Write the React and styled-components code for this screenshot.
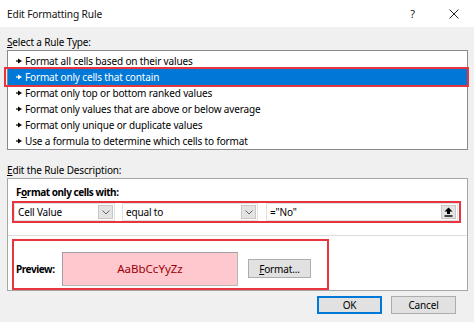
import React from 'react';
import styled, { createGlobalStyle } from 'styled-components';

const Global = createGlobalStyle`
  html, body { margin: 0; padding: 0; }
  body {
    width: 474px; height: 322px; overflow: hidden;
    background: #f0f0f0;
    font-family: "Noto Sans", "Open Sans", sans-serif;
    font-size: 10px; color: #000;
    letter-spacing: -0.15px;
  }
  * { box-sizing: border-box; }
`;

const RED = '#e6353e';

const Dialog = styled.div`
  width: 474px; height: 322px;
  display: flex; flex-direction: column;
  background: #f0f0f0;
`;

const TitleBar = styled.div`
  height: 27px; flex-shrink: 0;
  background: #fff;
  display: flex; align-items: center;
  padding-left: 7px;
`;

const Title = styled.div`
  flex: 1;
  font-size: 10.2px;
  color: #111;
`;

const TitleButton = styled.div`
  width: 41px; height: 27px;
  display: flex; align-items: center; justify-content: center;
  font-size: 11px; color: #222;
`;

const Body = styled.div`
  display: flex; flex-direction: column;
  padding: 0 6px 0 7px;
`;

const SectionLabel = styled.div`
  line-height: 14px;
  margin-top: ${p => p.$top}px;
`;

const ListBox = styled.div`
  margin-top: 1px;
  height: 100px;
  border: 1px solid #8a8a8a;
  background: #fff;
  padding-top: 2px;
`;

const Row = styled.div`
  position: relative;
  height: 16px;
  display: flex; align-items: center; gap: 3px;
  padding-left: 8px;
  background: ${p => (p.$selected ? '#0078d7' : 'transparent')};
  color: ${p => (p.$selected ? '#fff' : '#000')};
  ${p => p.$selected && `
    &::after {
      content: '';
      position: absolute;
      left: -4px; right: -2px; top: -2px; bottom: -2px;
      border: 2px solid ${RED};
    }
  `}
`;

const DescBox = styled.div`
  margin-top: 1px;
  border: 1px solid #a6a6a6;
  background: #fff;
  display: flex; flex-direction: column;
`;

const Heading = styled.div`
  padding: 6px 0 0 8px;
  line-height: 14px;
  font-weight: bold;
  letter-spacing: -0.45px;
`;

const CriteriaRow = styled.div`
  margin: 2px 0 0 4px;
  width: 449px; height: 22px;
  border: 2px solid ${RED};
  display: flex; align-items: center; gap: 7px;
`;

const Field = styled.div`
  width: ${p => p.$w}px; height: 18px;
  margin-left: ${p => p.$ml || 0}px;
  border: 1px solid #e2e2e2;
  background: #fff;
  display: flex; align-items: center;
  padding: 0 1px 0 3px;
`;

const FieldText = styled.span`
  flex: 1;
  white-space: nowrap;
`;

const DropButton = styled.div`
  width: 15px; height: 14px;
  background: #e3e3e3;
  border: 1px solid #c8c8c8;
  display: flex; align-items: center; justify-content: center;
`;

const Separator = styled.div`
  margin-top: 12px;
  height: 1px;
  background: #dcdcdc;
`;

const PreviewBox = styled.div`
  margin: 3px 0 0 4px;
  width: 317px; height: 51px;
  border: 2px solid ${RED};
  display: flex; align-items: center;
  padding: 8px 0 0 2px;
`;

const PreviewLabel = styled.div`
  width: 46px;
  font-weight: bold;
  letter-spacing: -0.45px;
`;

const Swatch = styled.div`
  width: 176px; height: 34px;
  background: #ffc7ce;
  border: 1px solid #a0a0a0;
  border-right-color: #b8b8b8;
  border-bottom-color: #b8b8b8;
  display: flex; align-items: center; justify-content: center;
  color: #9c0006;
  font-size: 11.5px;
  letter-spacing: 0;
`;

const Button = styled.div`
  width: ${p => p.$w}px; height: ${p => p.$h}px;
  margin-left: ${p => p.$ml || 0}px;
  background: #e1e1e1;
  border: 1px solid ${p => (p.$focused ? '#0078d7' : '#adadad')};
  box-shadow: ${p => (p.$focused ? 'inset 0 0 0 1px #0078d7' : 'none')};
  display: flex; align-items: center; justify-content: center;
`;

const Footer = styled.div`
  display: flex; justify-content: flex-end; gap: 9px;
  padding: 5px 12px 0 0;
`;

const Arrow = () => (
  <svg width="6" height="6" viewBox="0 0 6 6">
    <rect x="0" y="2.4" width="2.5" height="1.2" fill="currentColor" />
    <polygon points="2,0.6 6,3 2,5.4" fill="currentColor" />
  </svg>
);

const Chevron = () => (
  <svg width="8" height="5" viewBox="0 0 8 5">
    <polyline points="0.5,0.5 4,4 7.5,0.5" fill="none" stroke="#666" strokeWidth="1" />
  </svg>
);

const UploadIcon = () => (
  <svg width="9" height="10" viewBox="0 0 9 10">
    <polygon points="4.5,0.5 8.5,4.5 6,4.5 6,7 3,7 3,4.5 0.5,4.5" fill="#000" />
    <rect x="0.5" y="8.3" width="8" height="1.4" fill="#000" />
  </svg>
);

const CloseIcon = () => (
  <svg width="10" height="10" viewBox="0 0 10 10">
    <path d="M0.5 0.5 L9.5 9.5 M9.5 0.5 L0.5 9.5" stroke="#222" strokeWidth="1" />
  </svg>
);

const rules = [
  'Format all cells based on their values',
  'Format only cells that contain',
  'Format only top or bottom ranked values',
  'Format only values that are above or below average',
  'Format only unique or duplicate values',
  'Use a formula to determine which cells to format',
];

export default function App() {
  return (
    <Dialog>
      <Global />
      <TitleBar>
        <Title>Edit Formatting Rule</Title>
        <TitleButton>?</TitleButton>
        <TitleButton><CloseIcon /></TitleButton>
      </TitleBar>
      <Body>
        <SectionLabel $top={8}><u>S</u>elect a Rule Type:</SectionLabel>
        <ListBox>
          {rules.map((r, i) => (
            <Row key={r} $selected={i === 1}>
              <Arrow />
              <span>{r}</span>
            </Row>
          ))}
        </ListBox>
        <SectionLabel $top={13}><u>E</u>dit the Rule Description:</SectionLabel>
        <DescBox>
          <Heading>F<u>o</u>rmat only cells with:</Heading>
          <CriteriaRow>
            <Field $w={101}>
              <FieldText>Cell Value</FieldText>
              <DropButton><Chevron /></DropButton>
            </Field>
            <Field $w={136}>
              <FieldText>equal to</FieldText>
              <DropButton><Chevron /></DropButton>
            </Field>
            <Field $w={192} $ml={1}>
              <FieldText>="No"</FieldText>
              <DropButton><UploadIcon /></DropButton>
            </Field>
          </CriteriaRow>
          <Separator />
          <PreviewBox>
            <PreviewLabel>Preview:</PreviewLabel>
            <Swatch>AaBbCcYyZz</Swatch>
            <Button $w={63} $h={19} $ml={10}><span><u>F</u>ormat...</span></Button>
          </PreviewBox>
        </DescBox>
        <Footer>
          <Button $w={65} $h={18} $focused>OK</Button>
          <Button $w={65} $h={18}>Cancel</Button>
        </Footer>
      </Body>
    </Dialog>
  );
}
